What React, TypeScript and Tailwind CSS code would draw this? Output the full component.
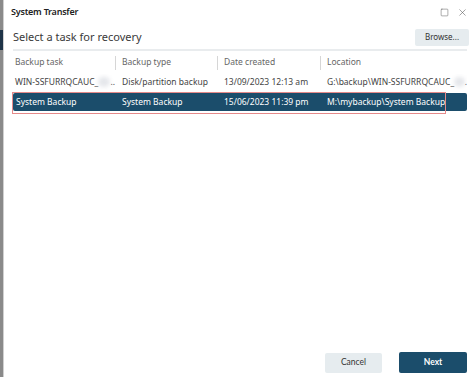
import { X, Square } from 'lucide-react'

const cols = [
  { label: 'Backup task', w: 'w-[102px]' },
  { label: 'Backup type', w: 'w-[102px]' },
  { label: 'Date created', w: 'w-[103px]' },
  { label: 'Location', w: 'flex-1' },
]

function Blur() {
  return <span className="inline-block w-[20px] h-[10px] rounded-full bg-gray-200 blur-[2px] align-middle" />
}

export default function App() {
  return (
    <div className="w-[474px] h-[377px] flex bg-white overflow-hidden" style={{ fontFamily: '"Noto Sans", "Open Sans", sans-serif' }}>
      {/* background window edge */}
      <div className="w-[3px] shrink-0 h-full bg-[#8a8a8a] flex flex-col">
        <div className="h-[30px]" />
        <div className="h-[20px] bg-[#1e3447]" />
      </div>

      <div className="flex-1 min-w-0 flex flex-col border-l border-[#d0d0d0]">
        {/* title bar */}
        <div className="h-[24px] flex items-center pl-[7px] pr-[6px]">
          <span className="text-[9px] font-semibold text-[#222] tracking-tight">System Transfer</span>
          <div className="ml-auto flex items-center gap-[8px] text-[#555]">
            <Square size={9} strokeWidth={1.3} />
            <X size={11} strokeWidth={1.2} />
          </div>
        </div>

        <div className="flex-1 min-w-0 flex flex-col pl-[9px] pr-[7px] pb-[4px]">
          {/* header */}
          <div className="flex items-center h-[20px] mt-[3px]">
            <span className="text-[11px] text-[#3a3a3a]">Select a task for recovery</span>
            <button className="ml-auto -mr-[2px] h-[17px] w-[54px] bg-[#e6ecef] rounded-[2px] text-[8px] text-[#333]">Browse...</button>
          </div>
          <div className="h-[2px] bg-[#e9ecee] mt-[2px]" />

          {/* table head */}
          <div className="flex items-center h-[23px] text-[8.5px] text-[#666]">
            {cols.map((c, i) => (
              <div key={c.label} className={`${c.w} flex items-center h-[14px] ${i > 0 ? 'border-l border-[#d6d6d6] pl-[6px]' : 'pl-[2px]'}`}>
                {c.label}
              </div>
            ))}
          </div>

          {/* row 1 */}
          <div className="flex items-center h-[16px] text-[8.5px] text-[#444] whitespace-nowrap overflow-hidden">
            <div className="w-[102px] shrink-0 pl-[2px] flex items-center">WIN-SSFURRQCAUC_<Blur />..</div>
            <div className="w-[102px] shrink-0 pl-[7px]">Disk/partition backup</div>
            <div className="w-[103px] shrink-0 pl-[7px]">13/09/2023 12:13 am</div>
            <div className="flex-1 min-w-0 pl-[7px] flex items-center">G:\backup\WIN-SSFURRQCAUC_<Blur />.</div>
          </div>

          {/* row 2 selected */}
          <div className="relative mt-[3px]">
            <div className="flex items-center h-[18px] text-[8.5px] text-white bg-[#1b4d6b] rounded-[2px] whitespace-nowrap overflow-hidden">
              <div className="w-[102px] shrink-0 pl-[3px]">System Backup</div>
              <div className="w-[102px] shrink-0 pl-[7px]">System Backup</div>
              <div className="w-[103px] shrink-0 pl-[7px]">15/06/2023 11:39 pm</div>
              <div className="flex-1 min-w-0 pl-[7px]">M:\mybackup\System Backup</div>
            </div>
            <div className="absolute left-[-1px] top-[-1px] w-[434px] h-[22px] border border-[#e58a8a]" />
          </div>

          {/* footer */}
          <div className="mt-auto flex justify-end items-center gap-[17px]" style={{ fontFamily: 'Lato, sans-serif' }}>
            <button className="w-[57px] h-[20px] bg-[#e6ecef] rounded-[2px] text-[8.5px] text-[#333]">Cancel</button>
            <button className="w-[68px] h-[21px] bg-[#1b4d6b] rounded-[2px] text-[8.5px] font-bold text-white">Next</button>
          </div>
        </div>
      </div>
    </div>
  )
}
